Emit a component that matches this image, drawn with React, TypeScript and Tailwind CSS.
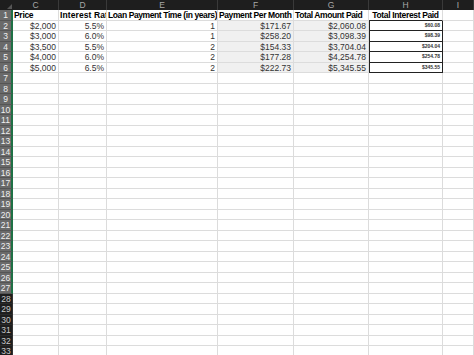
const cols = ["C", "D", "E", "F", "G", "H", "I"];

const data = [
  { price: "$2,000", rate: "5.5%", time: "1", monthly: "$171.67", total: "$2,060.08", interest: "$60.08" },
  { price: "$3,000", rate: "6.0%", time: "1", monthly: "$258.20", total: "$3,098.39", interest: "$98.39" },
  { price: "$3,500", rate: "5.5%", time: "2", monthly: "$154.33", total: "$3,704.04", interest: "$204.04" },
  { price: "$4,000", rate: "6.0%", time: "2", monthly: "$177.28", total: "$4,254.78", interest: "$254.78" },
  { price: "$5,000", rate: "6.5%", time: "2", monthly: "$222.73", total: "$5,345.55", interest: "$345.55" },
];

const headers = ["Price", "Interest Rate", "Loan Payment Time (in years)", "Payment Per Month", "Total Amount Paid", "Total Interest Paid"];

const cell = "h-[10.5px] overflow-hidden whitespace-nowrap border-r border-b border-[#dcdcdc] px-[2px] leading-[10.5px]";

function RowHead({ n }: { n: number }) {
  const selected = n <= 27;
  return (
    <div
      className={`h-[10.5px] border-b text-center text-[8.5px] leading-[10.5px] ${
        selected
          ? "border-r-2 border-b-[#555] border-r-[#1e7145] bg-[#6a6a6a] text-[#f0f0f0]"
          : "border-r border-b-[#2a2a2a] border-r-[#333] bg-[#1e1e1e] text-[#c8c8c8]"
      }`}
    >
      {n}
    </div>
  );
}

export default function App() {
  const rows = Array.from({ length: 33 }, (_, i) => i + 1);
  return (
    <main
      className="h-[355px] w-[474px] overflow-hidden bg-white text-[#333]"
      style={{ fontFamily: '"Liberation Sans", Arial, sans-serif' }}
    >
      <div className="grid grid-cols-[13px_46px_48px_111px_76px_75px_74px_31px]">
        {/* column headers */}
        <div className="relative h-[10px] bg-[#1e1e1e]">
          <div className="absolute right-[1px] bottom-[1px] h-0 w-0 border-t-[5px] border-r-[5px] border-t-transparent border-r-[#555]" />
        </div>
        {cols.map((c) => (
          <div
            key={c}
            className="h-[10px] border-r border-[#3a3a3a] bg-[#1e1e1e] text-center text-[8.5px] leading-[10px] text-[#a8a8a8]"
          >
            {c}
          </div>
        ))}

        {rows.map((n) => {
          const d = n >= 2 && n <= 6 ? data[n - 2] : null;
          const head = n === 1;
          return (
            <div key={n} className="contents">
              <RowHead n={n} />
              {head ? (
                <>
                  <div className={`${cell} pl-[1px] text-[8.5px] font-bold tracking-[-0.3px] text-black`}>{headers[0]}</div>
                  <div className={`${cell} pl-[1px] text-[8.5px] font-bold tracking-[0.1px] text-black`}>{headers[1]}</div>
                  {headers.slice(2, 5).map((h) => (
                    <div key={h} className={`${cell} pl-[1px] text-[8.5px] font-bold tracking-[-0.4px] text-black`}>
                      {h}
                    </div>
                  ))}
                  <div className={`${cell} border-b-[1.5px] border-b-[#222] text-center text-[8.5px] font-bold tracking-[-0.35px] text-black`}>
                    {headers[5]}
                  </div>
                  <div className={cell} />
                </>
              ) : d ? (
                <>
                  <div className={`${cell} text-right text-[8.5px]`}>{d.price}</div>
                  <div className={`${cell} text-right text-[8.5px]`}>{d.rate}</div>
                  <div className={`${cell} text-right text-[8.5px]`}>{d.time}</div>
                  <div className={`${cell} bg-[#f0f0f0] text-right text-[8.5px]`}>{d.monthly}</div>
                  <div className={`${cell} bg-[#f0f0f0] text-right text-[8.5px]`}>{d.total}</div>
                  <div className="h-[10.5px] border-x-[1.5px] border-b-[1.5px] border-[#222] px-[2px] text-right text-[5px] font-bold leading-[9px]">
                    {d.interest}
                  </div>
                  <div className={cell} />
                </>
              ) : (
                cols.map((c) => <div key={c} className={cell} />)
              )}
            </div>
          );
        })}
      </div>
    </main>
  );
}
